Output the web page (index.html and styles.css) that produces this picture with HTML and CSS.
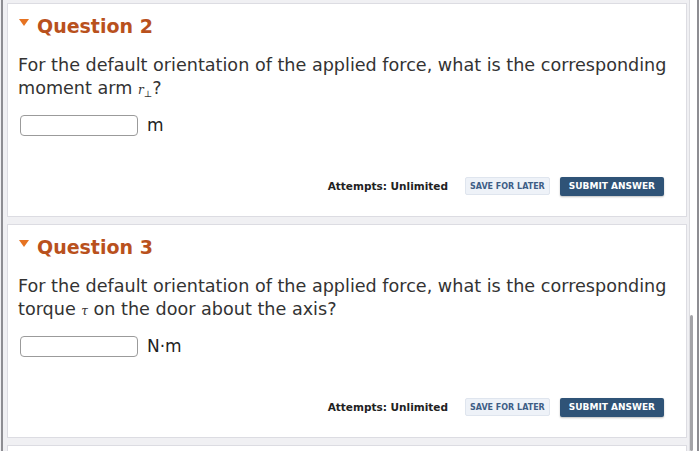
FILE: index.html
```html
<!DOCTYPE html>
<html>
<head>
<meta charset="utf-8">
<link rel="stylesheet" href="styles.css">
</head>
<body>
<div class="page">
  <div class="edge"></div>
  <div class="content">
    <section class="card">
      <h2 class="qtitle"><span class="tri"></span>Question 2</h2>
      <p class="prompt">For the default orientation of the applied force, what is the corresponding moment arm <span class="math"><i>r</i><sub>⊥</sub></span>?</p>
      <div class="answer"><span class="box"></span><span class="unit">m</span></div>
      <div class="actions">
        <span class="attempts">Attempts: Unlimited</span>
        <span class="btn save">SAVE FOR LATER</span>
        <span class="btn submit">SUBMIT ANSWER</span>
      </div>
    </section>
    <section class="card">
      <h2 class="qtitle"><span class="tri"></span>Question 3</h2>
      <p class="prompt">For the default orientation of the applied force, what is the corresponding torque <span class="math"><i>τ</i></span> on the door about the axis?</p>
      <div class="answer"><span class="box"></span><span class="unit">N·m</span></div>
      <div class="actions">
        <span class="attempts">Attempts: Unlimited</span>
        <span class="btn save">SAVE FOR LATER</span>
        <span class="btn submit">SUBMIT ANSWER</span>
      </div>
    </section>
    <section class="card last"></section>
  </div>
  <div class="scroll">
    <div class="track"><div class="thumb"></div></div>
    <div class="rail"></div>
  </div>
</div>
</body>
</html>
```
FILE: styles.css
```css
html, body {
  margin: 0;
  padding: 0;
  height: 100%;
  overflow: hidden;
}
body {
  background: #f0f0f3;
  font-family: "DejaVu Sans", Verdana, sans-serif;
  color: #333;
}
.page {
  display: flex;
  height: 451px;
}
.edge {
  width: 2px;
  margin-left: 1px;
  background: #8d8d92;
  flex: none;
}
.content {
  flex: 1;
  padding: 3px 2px 0 4px;
  display: flex;
  flex-direction: column;
  gap: 7px;
  overflow: hidden;
}
.card {
  background: #fff;
  border: 1px solid #dcdce2;
  padding: 0 10px 0 10px;
  height: 212px;
  flex: none;
}
.card.last {
  height: 20px;
}
.qtitle {
  margin: 10px 0 0 0;
  font-size: 19px;
  font-weight: bold;
  color: #b9511d;
  display: flex;
  align-items: center;
  height: 24px;
}
.tri {
  width: 0;
  height: 0;
  border-left: 5px solid transparent;
  border-right: 5px solid transparent;
  border-top: 7px solid #e67322;
  margin: 0 8px 8px 1px;
}
.prompt {
  margin: 16px 0 0 0;
  font-size: 17.6px;
  line-height: 23px;
  color: #333;
}
.math {
  font-family: "DejaVu Serif", serif;
  font-size: 12px;
  line-height: 0;
}
.math sub {
  font-size: 9px;
  font-style: normal;
  line-height: 0;
}
.answer {
  display: flex;
  align-items: center;
  margin-top: 14px;
  height: 22px;
}
.box {
  width: 116px;
  height: 19px;
  border: 1px solid #9b9b9b;
  border-radius: 4px;
  margin-left: 2px;
  background: #fff;
}
.unit {
  margin-left: 9px;
  font-size: 17px;
  color: #222;
}
.actions {
  display: flex;
  justify-content: flex-end;
  align-items: center;
  margin-top: 40px;
  margin-right: 12px;
  height: 20px;
}
.attempts {
  font-size: 10.5px;
  font-weight: bold;
  color: #222;
  margin-right: 17px;
}
.btn {
  font-weight: bold;
  height: 18px;
  display: flex;
  align-items: center;
  box-sizing: border-box;
  border-radius: 2px;
}
.save {
  font-size: 8px;
  background: #eef2f8;
  border: 1px solid #dfe5ee;
  color: #3e5e86;
  padding: 0 4px;
  margin-right: 10px;
}
.submit {
  font-size: 9px;
  background: #2f5377;
  color: #fff;
  padding: 0 9px;
  height: 19px;
  box-shadow: 0 1px 2px rgba(0,0,0,0.25);
}
.scroll {
  width: 11px;
  flex: none;
  display: flex;
  background: #fff;
}
.track {
  width: 5px;
  border-left: 1px solid #dcdce0;
  display: flex;
  flex-direction: column;
  justify-content: flex-end;
}
.thumb {
  width: 3px;
  height: 136px;
  background: #a4a4a8;
  border-radius: 2px;
}
.rail {
  margin-left: auto;
  width: 2px;
  margin-right: 1px;
  background: #8d8d92;
}
```
